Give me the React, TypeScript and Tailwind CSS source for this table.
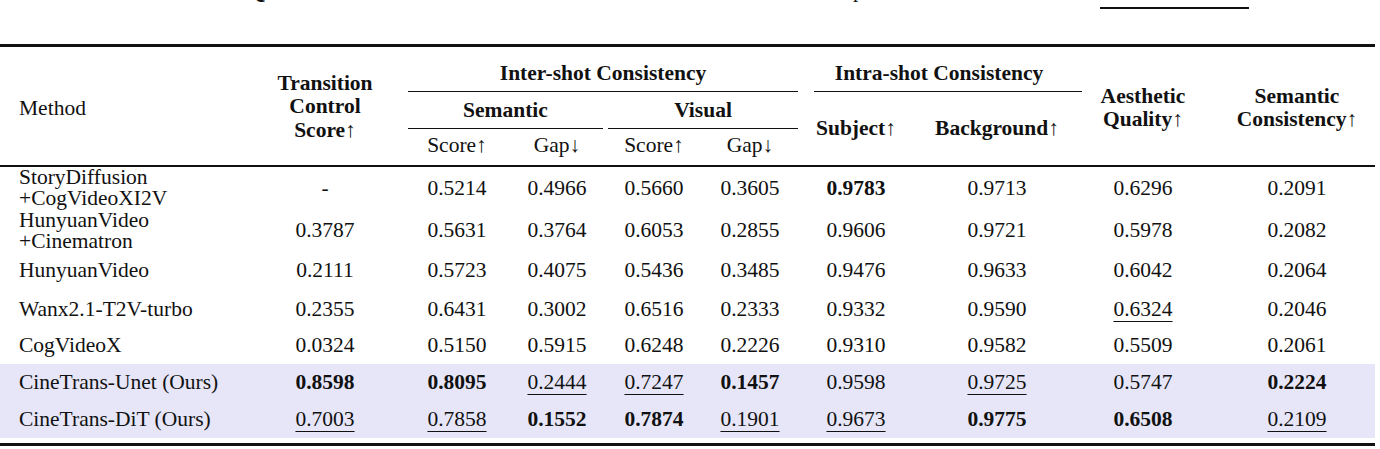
const GRID = "grid grid-cols-[252px_146px_118px_82px_112px_80px_132px_150px_142px_161px]";

type Row = { method: string[]; h: string; shaded?: boolean; cells: string[] };

// "b:" = best (bold), "u:" = second best (underlined)
const ROWS: Row[] = [
  {
    method: ["StoryDiffusion", "+CogVideoXI2V"],
    h: "h-[43px]",
    cells: ["-", "0.5214", "0.4966", "0.5660", "0.3605", "b:0.9783", "0.9713", "0.6296", "0.2091"],
  },
  {
    method: ["HunyuanVideo", "+Cinematron"],
    h: "h-[41px]",
    cells: ["0.3787", "0.5631", "0.3764", "0.6053", "0.2855", "0.9606", "0.9721", "0.5978", "0.2082"],
  },
  {
    method: ["HunyuanVideo"],
    h: "h-[40px]",
    cells: ["0.2111", "0.5723", "0.4075", "0.5436", "0.3485", "0.9476", "0.9633", "0.6042", "0.2064"],
  },
  {
    method: ["Wanx2.1-T2V-turbo"],
    h: "h-[37px]",
    cells: ["0.2355", "0.6431", "0.3002", "0.6516", "0.2333", "0.9332", "0.9590", "u:0.6324", "0.2046"],
  },
  {
    method: ["CogVideoX"],
    h: "h-[36px]",
    cells: ["0.0324", "0.5150", "0.5915", "0.6248", "0.2226", "0.9310", "0.9582", "0.5509", "0.2061"],
  },
  {
    method: ["CineTrans-Unet (Ours)"],
    h: "h-[37px]",
    shaded: true,
    cells: ["b:0.8598", "b:0.8095", "u:0.2444", "u:0.7247", "b:0.1457", "0.9598", "u:0.9725", "0.5747", "b:0.2224"],
  },
  {
    method: ["CineTrans-DiT (Ours)"],
    h: "h-[37px]",
    shaded: true,
    cells: ["u:0.7003", "u:0.7858", "b:0.1552", "b:0.7874", "u:0.1901", "u:0.9673", "b:0.9775", "b:0.6508", "u:0.2109"],
  },
];

const Up = () => <span className="font-normal">↑</span>;
const Down = () => <span className="font-normal">↓</span>;

const Value = ({ v, last }: { v: string; last: boolean }) => {
  const bold = v.startsWith("b:");
  const under = v.startsWith("u:");
  const text = bold || under ? v.slice(2) : v;
  return (
    <div className={`flex items-center justify-center ${last ? "pl-[5px]" : ""}`}>
      <span className={bold ? "font-bold" : under ? "underline decoration-1 underline-offset-[5px]" : ""}>
        {text}
      </span>
    </div>
  );
};

export default function App() {
  return (
    <div className="w-[1380px] h-[449px] overflow-hidden bg-white text-[#111] font-['Liberation_Serif','Times_New_Roman',serif] text-[21.5px] leading-[23px]">
      {/* tail of the caption above, mostly cut off */}
      <div className="h-[44px] flex items-start">
        <div className="w-[244px] shrink-0" />
        <div className="w-[22px] h-[4px] overflow-hidden shrink-0">
          <div className="-mt-[25px] text-[28px] leading-[28px] font-bold">Q</div>
        </div>
        <div className="w-[587px] shrink-0" />
        <div className="w-[11px] h-[3px] overflow-hidden shrink-0">
          <div className="-mt-[21px]">p</div>
        </div>
        <div className="w-[236px] shrink-0" />
        <div className="mt-[7px] h-[1.5px] w-[149px] bg-[#111]" />
      </div>

      <div className="w-[1375px]">
        <div className="h-[3px] bg-[#111]" />

        {/* header */}
        <div className={`${GRID} grid-rows-[45px_37px_36px] font-bold`}>
          <div className="col-start-1 row-start-1 row-span-3 flex items-center pl-[19px] pt-[5px] font-normal">
            Method
          </div>
          <div className="col-start-2 row-start-1 row-span-3 flex flex-col items-center justify-center pt-[2px] text-center leading-[23.5px]">
            <span>Transition</span>
            <span>Control</span>
            <span>
              Score<Up />
            </span>
          </div>
          <div className="col-start-3 col-span-4 row-start-1 flex flex-col justify-end">
            <div className="ml-[10px] -mr-[8px] flex flex-col">
              <div className="text-center pb-[6px]">Inter-shot Consistency</div>
              <div className="h-px bg-[#111]" />
            </div>
          </div>
          <div className="col-start-7 col-span-2 row-start-1 flex flex-col justify-end">
            <div className="text-center pb-[6px] pl-[16px]">Intra-shot Consistency</div>
            <div className="ml-[24px] -mr-[10px] h-px bg-[#111]" />
          </div>
          <div className="col-start-9 row-start-1 row-span-3 flex flex-col items-center justify-center pt-[4px] text-center">
            <span>Aesthetic</span>
            <span>
              Quality<Up />
            </span>
          </div>
          <div className="col-start-10 row-start-1 row-span-3 flex flex-col items-center justify-center pt-[4px] pl-[5px] text-center">
            <span>Semantic</span>
            <span>
              Consistency<Up />
            </span>
          </div>

          <div className="col-start-3 col-span-2 row-start-2 flex flex-col justify-end">
            <div className="ml-[10px] -mr-[5px] flex flex-col">
              <div className="text-center pb-[6px]">Semantic</div>
              <div className="h-px bg-[#111]" />
            </div>
          </div>
          <div className="col-start-5 col-span-2 row-start-2 flex flex-col justify-end">
            <div className="ml-[10px] -mr-[8px] flex flex-col">
              <div className="text-center pb-[6px]">Visual</div>
              <div className="h-px bg-[#111]" />
            </div>
          </div>
          <div className="col-start-7 row-start-2 row-span-2 flex items-center justify-center">
            Subject<Up />
          </div>
          <div className="col-start-8 row-start-2 row-span-2 flex items-center justify-center">
            Background<Up />
          </div>

          <div className="col-start-3 row-start-3 flex items-end justify-center pb-[8px] font-normal">
            Score<Up />
          </div>
          <div className="col-start-4 row-start-3 flex items-end justify-center pb-[8px] font-normal">
            Gap<Down />
          </div>
          <div className="col-start-5 row-start-3 flex items-end justify-center pb-[8px] font-normal">
            Score<Up />
          </div>
          <div className="col-start-6 row-start-3 flex items-end justify-center pb-[8px] font-normal">
            Gap<Down />
          </div>
        </div>

        <div className="h-[1.5px] bg-[#111]" />

        {/* body */}
        {ROWS.map((row, i) => (
          <div key={i} className={`${GRID} ${row.h} ${row.shaded ? "bg-[#e6e6f8]" : ""}`}>
            <div className="flex flex-col justify-center pl-[19px] leading-[21px]">
              {row.method.map((m) => (
                <span key={m}>{m}</span>
              ))}
            </div>
            {row.cells.map((v, j) => (
              <Value key={j} v={v} last={j === row.cells.length - 1} />
            ))}
          </div>
        ))}

        <div className="h-[5.5px]" />
        <div className="h-[3px] bg-[#111]" />
      </div>
    </div>
  );
}
